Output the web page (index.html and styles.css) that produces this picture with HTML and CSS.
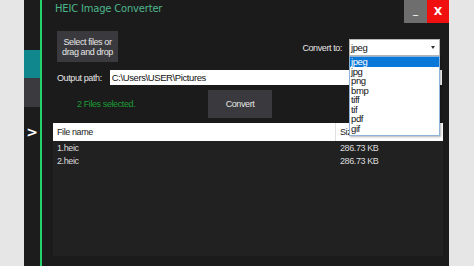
FILE: index.html
```html
<!DOCTYPE html>
<html lang="en">
<head>
    <meta charset="UTF-8">
    <title>HEIC Image Converter</title>
    <link rel="stylesheet" href="styles.css">
</head>
<body>
<div class="screen">
    <div class="gutter"></div>

    <!-- side rail -->
    <aside class="rail">
        <div class="tab tab-active"></div>
        <div class="tab tab-idle"></div>
        <div class="chev">&gt;</div>
    </aside>
    <div class="accent"></div>

    <main class="window">
        <header class="titlebar">
            <span class="title">HEIC Image Converter</span>
            <div class="win-btns">
                <div class="btn-min">_</div>
                <div class="btn-close">X</div>
            </div>
        </header>

        <div class="row-top">
            <div class="btn select-btn">Select files or<br>drag and drop</div>
            <div class="convert-to">
                <span class="lbl">Convert to:</span>
                <div class="combo">
                    <span>jpeg</span>
                    <span class="arrow"></span>
                    <ul class="options">
                        <li class="selected">jpeg</li>
                        <li>jpg</li>
                        <li>png</li>
                        <li>bmp</li>
                        <li>tiff</li>
                        <li>tif</li>
                        <li>pdf</li>
                        <li>gif</li>
                    </ul>
                </div>
            </div>
        </div>

        <div class="row-path">
            <span class="lbl">Output path:</span>
            <div class="path-input">C:\Users\USER\Pictures</div>
        </div>

        <div class="row-action">
            <span class="status">2 Files selected.</span>
            <div class="btn convert-btn">Convert</div>
        </div>

        <div class="list">
            <div class="list-head">
                <span class="col-name">File name</span>
                <span class="col-size">Size</span>
            </div>
            <div class="list-row">
                <span class="col-name">1.heic</span>
                <span class="col-size">286.73 KB</span>
            </div>
            <div class="list-row">
                <span class="col-name">2.heic</span>
                <span class="col-size">286.73 KB</span>
            </div>
        </div>
    </main>

    <div class="gutter"></div>
</div>
</body>
</html>
```

FILE: styles.css
```css
body {
    margin: 0;
    background: #e6e6e6;
    font-family: 'Liberation Sans', Arial, sans-serif;
    font-size: 9px;
    letter-spacing: -0.4px;
    white-space: nowrap;
    overflow: hidden;
}
.screen {
    display: flex;
    height: 266px;
}
.gutter {
    width: 24px;
    flex-shrink: 0;
}
.gutter:last-child {
    flex: 1;
}
.rail {
    width: 16px;
    background: #1c1c1c;
    padding-top: 50px;
    box-sizing: border-box;
}
.tab {
    height: 28px;
}
.tab-active {
    background: #0f878d;
}
.tab-idle {
    height: 29px;
    background: #3a3a3f;
}
.chev {
    margin-top: 18px;
    color: #fff;
    font-family: 'DejaVu Sans', sans-serif;
    font-weight: bold;
    font-size: 14px;
    text-align: center;
    line-height: 14px;
}
.accent {
    width: 2px;
    background: #25d16b;
}
.window {
    width: 407px;
    background: #1b1b1b;
    padding-left: 11px;
    box-sizing: border-box;
    color: #e0e0e0;
}
.titlebar {
    display: flex;
    justify-content: space-between;
    height: 23px;
}
.title {
    padding-left: 2px;
    padding-top: 3px;
    font-family: 'DejaVu Sans', sans-serif;
    font-size: 10px;
    letter-spacing: -0.2px;
    color: #4db58c;
}
.win-btns {
    display: flex;
}
.btn-min,
.btn-close {
    width: 23px;
    height: 23px;
    text-align: center;
    color: #fff;
    font-family: 'DejaVu Sans', sans-serif;
    letter-spacing: 0;
}
.btn-min {
    background: #6e6e6e;
    line-height: 20px;
    font-size: 10px;
}
.btn-close {
    width: 22px;
    background: #f01010;
    line-height: 23px;
    font-size: 11px;
    font-weight: bold;
}
.btn {
    background: #3a3a3e;
    color: #e6e6e6;
    text-align: center;
    display: flex;
    align-items: center;
    justify-content: center;
}
.row-top {
    display: flex;
    justify-content: space-between;
    margin-top: 8px;
    padding-left: 4px;
    padding-right: 9px;
}
.select-btn {
    width: 61px;
    height: 31px;
    line-height: 10px;
}
.convert-to {
    display: flex;
    align-items: center;
    gap: 7px;
    margin-top: 8px;
    align-self: flex-start;
}
.lbl {
    color: #e6e6e6;
}
.combo {
    position: relative;
    width: 91px;
    height: 17px;
    box-sizing: border-box;
    background: #fff;
    border: 1px solid #b8b8b8;
    color: #111;
    display: flex;
    align-items: center;
    justify-content: space-between;
    padding-left: 1px;
    font-size: 9.5px;
}
.arrow {
    width: 0;
    height: 0;
    margin-right: 4px;
    border-left: 2.5px solid transparent;
    border-right: 2.5px solid transparent;
    border-top: 3px solid #333;
}
.options {
    position: absolute;
    top: 16px;
    left: -1px;
    width: 91px;
    margin: 0;
    padding: 0 0 2px 0;
    list-style: none;
    background: #fff;
    border: 1px solid #8fb2d8;
    box-sizing: border-box;
    box-shadow: 1px 1px 2px rgba(0, 0, 0, 0.3);
}
.options li {
    height: 9.5px;
    line-height: 9.5px;
    padding-left: 1px;
    color: #111;
}
.options li.selected {
    background: #0a78d8;
    color: #fff;
}
.row-path {
    display: flex;
    align-items: center;
    gap: 8px;
    margin-top: 8px;
    padding-left: 4px;
}
.path-input {
    width: 332px;
    height: 15px;
    line-height: 15px;
    background: #fff;
    color: #111;
    padding-left: 2px;
    box-sizing: border-box;
    font-size: 9.5px;
}
.row-action {
    display: flex;
    align-items: center;
    margin-top: 5px;
    padding-left: 24px;
}
.status {
    width: 131px;
    color: #1c9c36;
}
.convert-btn {
    width: 64px;
    height: 28px;
}
.list {
    margin-top: 5px;
    width: 390px;
    height: 133px;
    background: #212121;
}
.list-head,
.list-row {
    display: flex;
}
.list-head {
    height: 18px;
    line-height: 18px;
    background: #fff;
    color: #222;
}
.list-row {
    height: 13px;
    line-height: 13px;
    color: #dcdcdc;
}
.list-row:nth-child(2) {
    margin-top: 1px;
}
.col-name {
    width: 283px;
    padding-left: 4px;
    box-sizing: border-box;
}
.list-head .col-name {
    border-right: 1px solid #e0e0e0;
}
.col-size {
    padding-left: 4px;
}
```
